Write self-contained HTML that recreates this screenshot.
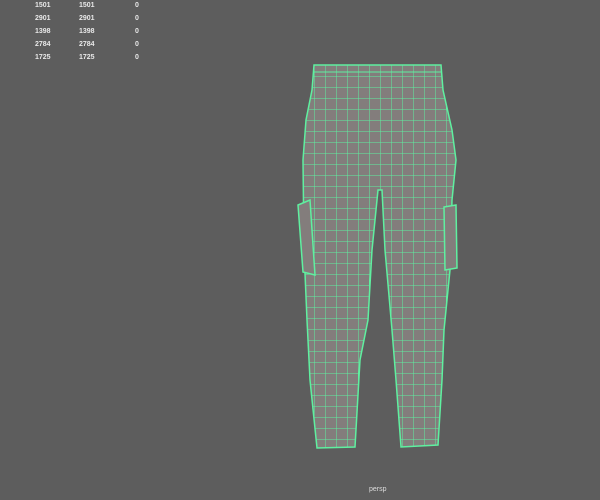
<!DOCTYPE html><html><head><style>
html,body{margin:0;width:600px;height:500px;background:#5d5d5d;overflow:hidden;font-family:"Liberation Sans",sans-serif}
.t{position:absolute;color:#e8e8e8;font-size:7px;font-weight:bold}
</style></head><body>
<div class="t" style="left:35px;top:2px">1501</div><div class="t" style="left:79px;top:2px">1501</div><div class="t" style="left:135px;top:2px">0</div>
<div class="t" style="left:35px;top:15px">2901</div><div class="t" style="left:79px;top:15px">2901</div><div class="t" style="left:135px;top:15px">0</div>
<div class="t" style="left:35px;top:28px">1398</div><div class="t" style="left:79px;top:28px">1398</div><div class="t" style="left:135px;top:28px">0</div>
<div class="t" style="left:35px;top:41px">2784</div><div class="t" style="left:79px;top:41px">2784</div><div class="t" style="left:135px;top:41px">0</div>
<div class="t" style="left:35px;top:54px">1725</div><div class="t" style="left:79px;top:54px">1725</div><div class="t" style="left:135px;top:54px">0</div>
<div class="t" style="left:369px;top:486px;font-weight:normal;color:#ddd">persp</div>
<svg width="600" height="500" style="position:absolute;left:0;top:0">
<defs>
<pattern id="g" width="11" height="11" patternUnits="userSpaceOnUse" x="314" y="65">
<path d="M0 0H11M0 0V11" stroke="#5ff0a0" stroke-width="1" fill="none"/></pattern>
<clipPath id="c"><path id="p" d="M314 65 L441 65 L443 90 L452 130 L456 160 L452 200 L450 270 L444 330 L442 380 L438 445 L401 447 L396 380 L392 330 L385 250 L382 190 L378 190 L372 250 L368 320 L360 360 L355 447 L317 448 L310 380 L307 320 L304 250 L303 160 L306 120 L312 90 Z"/></clipPath>
</defs>
<use href="#p" fill="#837d7c"/>
<rect x="290" y="60" width="180" height="400" fill="url(#g)" clip-path="url(#c)"/>
<use href="#p" fill="none" stroke="#5ff0a0" stroke-width="1.5"/>
<path d="M298 205 L310 200 L315 275 L303 272 Z" fill="#837d7c" stroke="#5ff0a0" stroke-width="1.5"/>
<path d="M444 207 L456 205 L457 268 L445 270 Z" fill="#837d7c" stroke="#5ff0a0" stroke-width="1.5"/>
<path d="M314 72 H441" stroke="#5ff0a0"/>
</svg>
</body></html>
